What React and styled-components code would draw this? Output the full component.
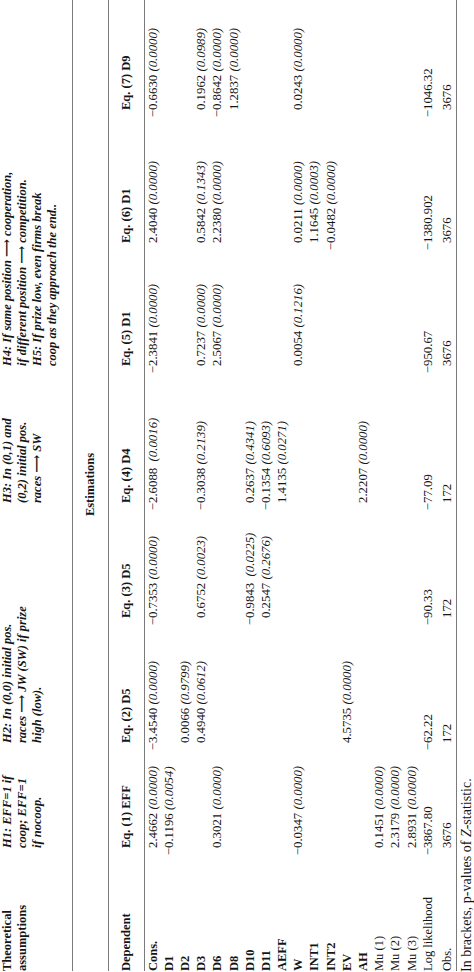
import React from 'react';
import styled, { createGlobalStyle } from 'styled-components';

const GlobalStyle = createGlobalStyle`
  html, body {
    margin: 0;
    padding: 0;
    background: #fff;
  }
  body {
    overflow: hidden;
  }
`;

const COLS = '123px 105px 125px 115px 137px 123px 133px 130px';
const RULE = '1.5px solid #7b7b7b';

const Page = styled.div`
  width: 474px;
  height: 972px;
  overflow: hidden;
  background: #fff;
  color: #151515;
  font-family: "Liberation Serif", "Times New Roman", "DejaVu Serif", serif;
`;

// the table is printed sideways on the page
const Sideways = styled.div`
  width: 972px;
  height: 474px;
  transform-origin: 0 0;
  transform: translateY(972px) rotate(-90deg);
`;

const Sheet = styled.div`
  width: 991px;
  margin: -2px 0 0 -1px;
  font-size: 12.5px;
`;

const Band = styled.div`
  display: grid;
  grid-template-columns: ${COLS};
  border-bottom: ${RULE};
`;

const TheoryBand = styled(Band)`
  padding-bottom: 12px;
  line-height: 15px;
  align-items: start;
`;

const EstBand = styled.div`
  width: 973px;
  height: 35px;
  display: flex;
  align-items: center;
  justify-content: center;
  border-bottom: ${RULE};
  font-weight: bold;
`;

const HeadBand = styled(Band)`
  height: 35px;
  align-items: center;
  font-weight: bold;
`;

const DataBand = styled.div`
  border-bottom: ${RULE};
  font-size: 12.8px;
`;

const Rows = styled.div`
  display: grid;
  grid-template-columns: ${COLS};
  grid-auto-rows: 16.2px;
  align-items: center;
  white-space: nowrap;
`;

const ObsRows = styled(Rows)`
  padding-top: 3px;
`;

const Label = styled.div`
  font-size: 12.5px;
  font-weight: ${p => (p.$plain ? 'normal' : 'bold')};
`;

const Hypo = styled.div`
  grid-column: span ${p => p.$span || 1};
  font-weight: bold;
  font-style: italic;
  white-space: nowrap;
`;

const Line = styled.div``;

const Cell = styled.div`
  margin-left: ${p => (p.$neg ? '-0.564em' : '0')};
`;

const PVal = styled.i`
  font-style: italic;
`;

const Note = styled.div`
  padding: 2.5px 0 0 0;
  margin-left: -1px;
  font-size: 14px;
  line-height: 16px;
`;

const headers = [
  'Dependent',
  'Eq. (1) EFF',
  'Eq. (2) D5',
  'Eq. (3) D5',
  'Eq. (4) D4',
  'Eq. (5) D1',
  'Eq. (6) D1',
  'Eq. (7) D9',
];

const hypotheses = [
  { span: 1, lines: ['H1: EFF=1 if', 'coop; EFF=1', 'if nocoop.'] },
  { span: 2, lines: ['H2: In (0,0) initial pos.', 'races \u27f6 JW (SW) if prize', 'high (low).'] },
  { span: 1, lines: ['H3: In (0,1) and', '(0,2) initial pos.', 'races \u27f6 SW'] },
  {
    span: 3,
    lines: [
      'H4: If same position \u27f6 cooperation,',
      'if different position \u27f6 competition.',
      'H5: If prize low, even firms break',
      'coop as they approach the end..',
    ],
  },
];

const _ = null;

const rows = [
  ['Cons.', [['2.4662', '0.0000'], ['−3.4540', '0.0000'], ['−0.7353', '0.0000'], ['−2.6088', '0.0016', 2], ['−2.3841', '0.0000'], ['2.4040', '0.0000'], ['−0.6630', '0.0000']]],
  ['D1', [['−0.1196', '0.0054'], _, _, _, _, _, _]],
  ['D2', [_, ['0.0066', '0.9799'], _, _, _, _, _]],
  ['D3', [_, ['0.4940', '0.0612'], ['0.6752', '0.0023'], ['−0.3038', '0.2139'], ['0.7237', '0.0000'], ['0.5842', '0.1343'], ['0.1962', '0.0989']]],
  ['D6', [['0.3021', '0.0000'], _, _, _, ['2.5067', '0.0000'], ['2.2380', '0.0000'], ['−0.8642', '0.0000']]],
  ['D8', [_, _, _, _, _, _, ['1.2837', '0.0000']]],
  ['D10', [_, _, ['−0.9843', '0.0225', 2], ['0.2637', '0.4341'], _, _, _]],
  ['D11', [_, _, ['0.2547', '0.2676'], ['−0.1354', '0.6093'], _, _, _]],
  ['AEFF', [_, _, _, ['1.4135', '0.0271'], _, _, _]],
  ['W', [['−0.0347', '0.0000'], _, _, _, ['0.0054', '0.1216'], ['0.0211', '0.0000'], ['0.0243', '0.0000']]],
  ['INT1', [_, _, _, _, _, ['1.1645', '0.0003'], _]],
  ['INT2', [_, _, _, _, _, ['−0.0482', '0.0000'], _]],
  ['EV', [_, ['4.5735', '0.0000'], _, _, _, _, _]],
  ['AH', [_, _, _, ['2.2207', '0.0000'], _, _, _]],
  ['Mu (1)', [['0.1451', '0.0000'], _, _, _, _, _, _], true],
  ['Mu (2)', [['2.3179', '0.0000'], _, _, _, _, _, _], true],
  ['Mu (3)', [['2.8931', '0.0000'], _, _, _, _, _, _], true],
  ['Log likelihood', [['−3867.80'], ['−62.22'], ['−90.33'], ['−77.09'], ['−950.67'], ['−1380.902'], ['−1046.32']], true],
];

const obs = ['3676', '172', '172', '172', '3676', '3676', '3676'];

const Value = ({ v }) => {
  if (!v) return <Cell />;
  const [num, p, gap] = v;
  return (
    <Cell $neg={num.startsWith('−')}>
      {num}
      {p && (
        <>
          {gap === 2 ? '\u00a0 ' : ' '}
          <PVal>({p})</PVal>
        </>
      )}
    </Cell>
  );
};

export default function App() {
  return (
    <Page>
      <GlobalStyle />
      <Sideways>
        <Sheet>
          <TheoryBand>
            <Label>
              <Line>Theoretical</Line>
              <Line>assumptions</Line>
            </Label>
            {hypotheses.map(h => (
              <Hypo key={h.lines[0]} $span={h.span}>
                {h.lines.map(l => (
                  <Line key={l}>{l}</Line>
                ))}
              </Hypo>
            ))}
          </TheoryBand>

          <EstBand>Estimations</EstBand>

          <HeadBand>
            {headers.map(h => (
              <div key={h}>{h}</div>
            ))}
          </HeadBand>

          <DataBand>
            <Rows>
              {rows.map(([name, vals, plain]) => (
                <React.Fragment key={name}>
                  <Label $plain={plain}>{name}</Label>
                  {vals.map((v, i) => (
                    <Value key={`${name}-${i}`} v={v} />
                  ))}
                </React.Fragment>
              ))}
            </Rows>
            <ObsRows>
              <Label $plain>Obs.</Label>
              {obs.map((o, i) => (
                <Cell key={`obs-${i}`}>{o}</Cell>
              ))}
            </ObsRows>
          </DataBand>

          <Note>
            In brackets, p-values of <i>Z</i>-statistic.
          </Note>
        </Sheet>
      </Sideways>
    </Page>
  );
}
